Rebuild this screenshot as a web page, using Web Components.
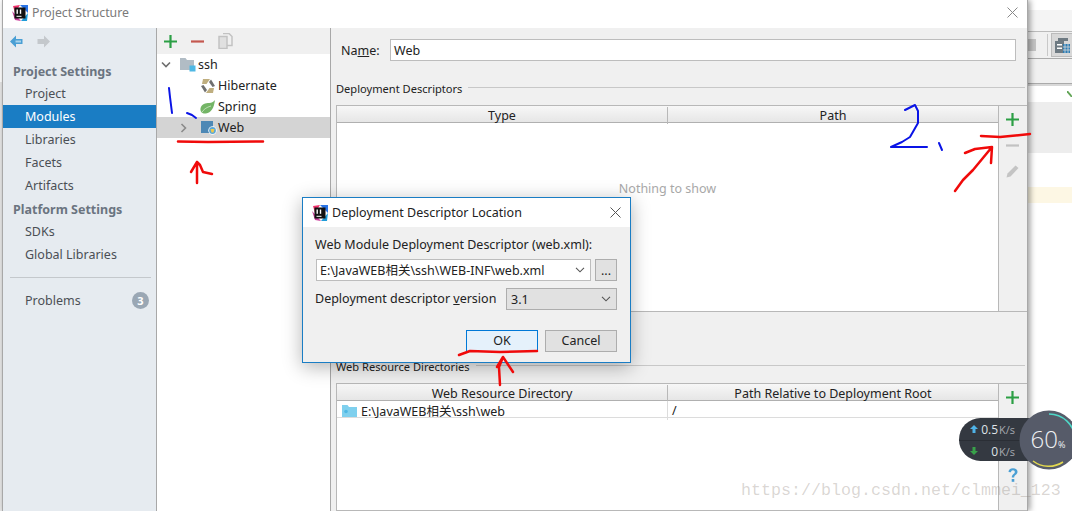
<!DOCTYPE html>
<html>
<head>
<meta charset="utf-8">
<title>Project Structure</title>
<style>
  html, body { margin: 0; padding: 0; background: #fff; }
  body { width: 1072px; height: 511px; overflow: hidden; font: 12.5px "Noto Sans", "Noto Sans CJK SC", sans-serif; color: #222; }
</style>
</head>
<body>
<ps-app></ps-app>
<script>
// Small helper: every element gets an open shadow root from a string
class Base extends HTMLElement {
  constructor() {
    super();
    this.attachShadow({ mode: 'open' });
  }
  connectedCallback() {
    this.shadowRoot.innerHTML = this.render();
  }
}

const icons = {
  back: '<svg width="15" height="15" viewBox="0 0 15 15"><path d="M1 7.500 7 1.500v3.500h6.500v5H7v3.500z" fill="#4a9fd4"/><path d="M6.500 6.500h5.500v2H6.500z" fill="#a9d3ec"/></svg>',
  forward: '<svg width="15" height="15" viewBox="0 0 15 15"><path d="M14 7.500 8 1.500v3.500H1.500v5H8v3.500z" fill="#c4c8cc"/></svg>',
  plus: '<svg width="13" height="13" viewBox="0 0 13 13"><path d="M5.400 0h2.200v5.400H13v2.200H7.600V13H5.400V7.600H0V5.400h5.400z" fill="#2c9f45"/></svg>',
  minus: '<svg width="13" height="13" viewBox="0 0 13 13"><path d="M0 5.400h13v2.200H0z" fill="#c4584f"/></svg>',
  minusOff: '<svg width="13" height="13" viewBox="0 0 13 13"><path d="M0 5.400h13v2.200H0z" fill="#c2c2c2"/></svg>',
  copy: '<svg width="15" height="16" viewBox="0 0 15 16"><path d="M5 .5h6l3 3v9H9" fill="none" stroke="#c2c2c2" stroke-width="1.500"/><path d="M1 3.500h8v12H1z" fill="#e0e0e0" stroke="#c2c2c2" stroke-width="1.500"/></svg>',
  pencil: '<svg width="13" height="13" viewBox="0 0 13 13"><path d="M9.500 0.500 12.500 3 4.500 11.500 0.500 12.500 1.500 8.500z" fill="#c4c4c4"/></svg>',
  help: '<svg width="12" height="16" viewBox="0 0 12 16"><path d="M1.500 5C1.500 2.500 3.300 1.200 6 1.200s4.500 1.400 4.500 3.600c0 3-3.300 3-3.300 5.700H4.800c0-3.400 3-3.500 3-5.500C7.800 4 7.100 3.300 6 3.300S4 4 4 5.300z" fill="#4a9fd4"/><rect x="4.700" y="12" width="2.600" height="2.800" fill="#4a9fd4"/></svg>',
  chevDown: '<svg width="10" height="8" viewBox="0 0 10 8"><path d="M1 1.500 5 5.500 9 1.500" fill="none" stroke="#6e6e6e" stroke-width="1.600"/></svg>',
  chevRight: '<svg width="8" height="10" viewBox="0 0 8 10"><path d="M1.500 1 5.500 5 1.500 9" fill="none" stroke="#8a8a8a" stroke-width="1.600"/></svg>',
  comboArrow: '<svg width="10" height="6" viewBox="0 0 10 6"><path d="M1 .8 5 4.800 9 .8" fill="none" stroke="#555" stroke-width="1.100"/></svg>',
  moduleFolder: '<svg width="16" height="14" viewBox="0 0 16 14"><path d="M0 0h5.500l1.500 2H14v10H0z" fill="#b1bcc5"/><rect x="9.500" y="7.500" width="6" height="6" fill="#4fb8e4"/></svg>',
  hibernate: '<svg width="16" height="16" viewBox="0 0 16 16"><path d="M3 1h7L6.500 6H2z" fill="#bfae7f"/><path d="M13 15H6l3.500-5H14z" fill="#bfae7f"/><path d="M11 1.500 15 8l-2.500 1L9 4z" fill="#6f6f6f"/><path d="M5 14.500 1 8l2.500-1L7 12z" fill="#6f6f6f"/></svg>',
  spring: '<svg width="16" height="14" viewBox="0 0 16 14"><path d="M15 0C14 8 11 13 6 13.500 2.500 14 0 12 .5 8.500 1.200 4 6 3 9 3c3 0 5-1.500 6-3z" fill="#74b566"/><path d="M2 12C5 8 8 7 11 6" stroke="#d6ecd0" stroke-width=".8" fill="none"/></svg>',
  web: '<svg width="16" height="14" viewBox="0 0 16 14"><path d="M0 0h12v12H0z" fill="#4d88b5"/><circle cx="11.500" cy="9.500" r="4.200" fill="#fff"/><circle cx="11.500" cy="9.500" r="3.400" fill="#5aa7d8"/><path d="M9.500 8h4l-1 3.500h-2z" fill="#f0c94a"/></svg>',
  folder: '<svg width="15" height="12" viewBox="0 0 15 12"><path d="M0 0h5.500l1.500 2H15v10H0z" fill="#7fd0ee"/><circle cx="4" cy="6.500" r="1.800" fill="#4fb8e4"/></svg>',
  logo: '<svg width="16" height="16" viewBox="0 0 16 16"><path d="M1 1 8 0 3 8z" fill="#f0316b"/><path d="M8 0h8v8z" fill="#2a74e6"/><path d="M0 6l3 9 6 1z" fill="#c93d9a"/><path d="M9 16h6l1-8z" fill="#1e9bd8"/><rect x="2.500" y="2.500" width="11" height="11" fill="#111"/><rect x="4.500" y="4.500" width="1.400" height="4.300" fill="#fff"/><rect x="7.800" y="4.500" width="1.400" height="4.300" fill="#fff"/><rect x="4.500" y="10.800" width="5" height="1" fill="#fff"/></svg>'
};

class IconGlyph extends Base {
  render() {
    return `<style>:host { display: inline-flex; align-items: center; justify-content: center; flex: none; } svg { display: block; }</style>${icons[this.getAttribute('name')] || ''}`;
  }
}

// Title strip shared by the main window and the dialog
class TitleBar extends Base {
  render() {
    const h = this.getAttribute('height') || 28;
    const lift = this.getAttribute('lift') || 0;
    const close = this.getAttribute('close-color') || '#555';
    const color = this.getAttribute('color') || '#222';
    const size = this.getAttribute('size') || 12.5;
    return `<style>
      :host { display: flex; align-items: center; height: ${h}px; box-sizing: border-box; background: #fff; padding: 0 9px ${lift}px 9px; color: ${color}; font-size: ${size}px; flex: none; }
      span { margin-left: 4px; flex: 1; }
      svg.x { display: block; }
    </style>
    <icon-glyph name="logo"></icon-glyph><span><slot></slot></span>
    <svg class="x" width="11" height="11" viewBox="0 0 11 11"><path d="M.5.500l10 10M10.500.5l-10 10" stroke="${close}" stroke-width="1"/></svg>`;
  }
}

class NavItem extends Base {
  render() {
    const sel = this.hasAttribute('selected');
    return `<style>
      :host { display: flex; align-items: center; height: 23px; padding-left: 22px; color: ${sel ? '#fff' : '#4b4f55'}; background: ${sel ? '#1a7dc4' : 'none'}; }
    </style><slot></slot>`;
  }
}

class NavHead extends Base {
  render() {
    return `<style>
      :host { display: flex; align-items: center; height: 22px; padding-left: 10px; color: #6b7480; font-weight: 700; }
    </style><slot></slot>`;
  }
}

class PsSidebar extends Base {
  render() {
    return `<style>
      :host { display: flex; flex-direction: column; width: 153px; flex: none; background: #e6ebf0; border-right: 1px solid #a8a8a8; }
      .tools { display: flex; height: 26px; padding-left: 6px; gap: 12px; align-items: center; }
      .gap1 { height: 6px; }
      .gap2 { height: 1px; }
      hr { border: 0; height: 1px; background: #c4c8cc; margin: 11px 5px 11px 7px; }
      .problems { display: flex; align-items: center; justify-content: space-between; padding-right: 7px; }
      .badge { width: 17px; height: 17px; border-radius: 50%; background: #9aa7b4; color: #fff; font-size: 11px; font-weight: 700; display: flex; align-items: center; justify-content: center; }
    </style>
    <div class="tools"><icon-glyph name="back"></icon-glyph><icon-glyph name="forward"></icon-glyph></div>
    <div class="gap1"></div>
    <nav-head>Project Settings</nav-head>
    <nav-item>Project</nav-item>
    <nav-item selected>Modules</nav-item>
    <nav-item>Libraries</nav-item>
    <nav-item>Facets</nav-item>
    <nav-item>Artifacts</nav-item>
    <div class="gap2"></div>
    <nav-head>Platform Settings</nav-head>
    <nav-item>SDKs</nav-item>
    <nav-item>Global Libraries</nav-item>
    <hr>
    <nav-item class="problems">Problems<span class="badge">3</span></nav-item>`;
  }
}

class TreeRow extends Base {
  render() {
    const sel = this.hasAttribute('selected');
    const chev = this.getAttribute('chevron');
    const pad = this.getAttribute('pad') || 4;
    const gap = this.getAttribute('gap') || 9;
    const tgap = this.getAttribute('text-gap') || 2;
    return `<style>
      :host { display: flex; align-items: center; height: 21px; padding-left: ${pad}px; background: ${sel ? '#d4d4d4' : 'none'}; color: #222; }
      .c { width: 10px; margin-right: ${gap}px; display: flex; justify-content: center; }
      .t { margin-left: ${tgap}px; }
    </style>
    ${chev ? `<span class="c"><icon-glyph name="${chev}"></icon-glyph></span>` : ''}
    <icon-glyph name="${this.getAttribute('icon')}"></icon-glyph><span class="t"><slot></slot></span>`;
  }
}

class TreePanel extends Base {
  render() {
    return `<style>
      :host { display: flex; flex-direction: column; width: 173px; flex: none; background: #fff; border-right: 1px solid #a8a8a8; }
      .tools { height: 26px; background: #f0f0f0; display: flex; align-items: center; padding-left: 7px; gap: 14px; flex: none; }
    </style>
    <div class="tools"><icon-glyph name="plus"></icon-glyph><icon-glyph name="minus"></icon-glyph><icon-glyph name="copy"></icon-glyph></div>
    <div class="rows">
      <tree-row chevron="chevDown" icon="moduleFolder">ssh</tree-row>
      <tree-row pad="43" icon="hibernate">Hibernate</tree-row>
      <tree-row pad="43" icon="spring">Spring</tree-row>
      <tree-row selected pad="22" gap="12" text-gap="1" chevron="chevRight" icon="web">Web</tree-row>
    </div>`;
  }
}

class GroupTitle extends Base {
  render() {
    return `<style>
      :host { display: flex; align-items: center; height: 16px; box-sizing: border-box; padding-bottom: 2px; font-size: 11.1px; color: #222; gap: 6px; }
      i { flex: 1; height: 1px; background: #c8c8c8; position: relative; top: -1px; margin-right: 2px; }
    </style><slot></slot><i></i>`;
  }
}

class DataTable extends Base {
  render() {
    return `<style>
      :host { display: flex; flex-direction: column; flex: 1; min-width: 0; background: #fff; border: 1px solid #b8b8b8; border-right: 0; box-sizing: border-box; }
      .head { display: grid; grid-template-columns: 330px 1fr; height: 16px; flex: none; background: linear-gradient(#f7f7f7, #e6e6e6); border-bottom: 1px solid #b0b0b0; }
      .head span { display: flex; align-items: center; justify-content: center; font-size: 12.5px; color: #222; }
      .head span + span { border-left: 1px solid #b8b8b8; margin: 1px 0; }
      .body { flex: 1; display: flex; flex-direction: column; }
    </style>
    <div class="head"><span>${this.getAttribute('col-a')}</span><span>${this.getAttribute('col-b')}</span></div>
    <div class="body"><slot></slot></div>`;
  }
}

class SideTools extends Base {
  render() {
    return `<style>
      :host { display: flex; flex-direction: column; align-items: center; width: 29px; flex: none; border: 1px solid #b8b8b8; border-right: 0; box-sizing: border-box; padding: 7px 1px 0 0; gap: 13px; }
    </style><slot></slot>`;
  }
}

class FormPane extends Base {
  render() {
    return `<style>
      :host { display: flex; flex-direction: column; flex: 1; min-width: 0; background: #f0f0f0; padding-left: 5px; box-sizing: border-box; }
      .name { display: flex; align-items: center; height: 22px; margin-top: 11px; flex: none; }
      .name label { width: 54px; padding-left: 5px; box-sizing: border-box; }
      .name u { text-decoration: underline; }
      .name div { width: 626px; height: 22px; box-sizing: border-box; border: 1px solid #bdbdbd; background: #fff; padding-left: 3px; display: flex; align-items: center; }
      group-title.a { margin-top: 20px; }
      .sec { display: flex; flex: none; }
      .sec.a { height: 207px; margin-top: 8px; }
      .sec.b { flex: 1; margin-top: 8px; }
      group-title.b { margin-top: 47px; }
      .empty { height: 130px; flex: none; display: flex; align-items: center; justify-content: center; color: #a8a8a8; }
      .row { display: grid; grid-template-columns: 330px 1fr; height: 16px; border-bottom: 1px solid #dcdcdc; font-size: 12.5px; }
      .row > span { display: flex; align-items: center; gap: 4px; padding-left: 5px; }
      .row > span + span { border-left: 1px solid #dcdcdc; padding-left: 4px; }
    </style>
    <div class="name"><label>Na<u>m</u>e:</label><div>Web</div></div>
    <group-title class="a">Deployment Descriptors</group-title>
    <div class="sec a">
      <data-table col-a="Type" col-b="Path"><div class="empty">Nothing to show</div></data-table>
      <side-tools><icon-glyph name="plus"></icon-glyph><icon-glyph name="minusOff"></icon-glyph><icon-glyph name="pencil"></icon-glyph></side-tools>
    </div>
    <group-title class="b">Web Resource Directories</group-title>
    <div class="sec b">
      <data-table col-a="Web Resource Directory" col-b="Path Relative to Deployment Root">
        <div class="row"><span><icon-glyph name="folder"></icon-glyph>E:\\JavaWEB相关\\ssh\\web</span><span>/</span></div>
      </data-table>
      <side-tools>
        <icon-glyph name="plus"></icon-glyph>
        <icon-glyph name="help" style="margin-top:50px"></icon-glyph>
      </side-tools>
    </div>`;
  }
}

class PsWindow extends Base {
  render() {
    return `<style>
      :host { display: flex; flex-direction: column; width: 1026px; height: 511px; flex: none; background: #fff; box-shadow: 2px 0 6px rgba(0,0,0,.4); border-left: 1px solid #a8a8a8; border-right: 1px solid #a8a8a8; box-sizing: border-box; position: relative; }
      .body { display: flex; flex: 1; min-height: 0; }
    </style>
    <title-bar height="28" lift="3" size="12.3" close-color="#888" color="#7a7a7a">Project Structure</title-bar>
    <div class="body"><ps-sidebar></ps-sidebar><tree-panel></tree-panel><form-pane></form-pane></div>`;
  }
}

// What shows of the IDE behind the window
class IdeBackdrop extends Base {
  render() {
    const side = this.getAttribute('side');
    if (side === 'left') {
      return `<style>:host { display: block; width: 2px; flex: none; background: linear-gradient(#fff 82px, #e8e8e8 82px); }</style>`;
    }
    return `<style>
      :host { display: flex; flex-direction: column; flex: 1; min-width: 0; background: #fff; }
      .a { height: 10px; }
      .b { height: 21px; background: #f4f4f4; border-bottom: 1px solid #bbb; }
      .tools { height: 26px; background: #f0f0f0; display: flex; align-items: center; border-bottom: 1px solid #aaa; }
      .tools i { display: block; width: 8px; height: 12px; background: #c4c4c4; }
      .tools b { display: block; width: 1px; height: 22px; background: #c8c8c8; margin-left: 11px; }
      .tools span { display: flex; align-items: center; justify-content: center; width: 21px; height: 24px; margin-left: 3px; background: #d8d8d8; border: 1px solid #bbb; border-right: 0; box-sizing: border-box; }
      .tools svg { display: block; }
      .g { height: 24px; background: #f0f0f0; border-bottom: 1px solid #aaa; }
      .c { height: 18px; border-top: 2px solid #d8d8d8; display: flex; justify-content: flex-end; align-items: flex-start; padding-top: 5px; box-sizing: border-box; }
      .d { height: 51px; background: #ededed; }
      .e { height: 34px; }
      .f { height: 16px; background: #fdf7e4; }
    </style>
    <div class="a"></div><div class="b"></div>
    <div class="tools"><i></i><b></b><span><svg width="15" height="15" viewBox="0 0 15 15"><path d="M3 0h10v3H3zM0 3h9v12H0z" fill="#6e7a82"/><path d="M2 6h5v1.500H2zM2 9.500h5V11H2z" fill="#fff"/><path d="M8 6h7v9H8z" fill="#2d7db5"/><path d="M10 6v9M13 6v9M8 9h7M8 12h7" stroke="#d8d8d8" stroke-width=".8"/></svg></span></div>
    <div class="g"></div>
    <div class="c"><svg width="5" height="6" viewBox="0 0 5 6"><path d="M0 0l5 6" stroke="#62a557" stroke-width="1.800"/></svg></div>
    <div class="d"></div><div class="e"></div><div class="f"></div>`;
  }
}

class DdDialog extends Base {
  render() {
    return `<style>
      :host { position: absolute; left: 302px; top: 197px; width: 329px; height: 166px; box-sizing: border-box; background: #f0f0f0; border: 1px solid #1a7dc4; box-shadow: 0 4px 18px rgba(0,0,0,.3); display: flex; flex-direction: column; color: #222; font-size: 12.5px; }
      .content { display: flex; flex-direction: column; padding: 0 13px 0 12px; flex: 1; }
      .lbl { height: 15px; line-height: 15px; margin-top: 10px; }
      .combo { display: flex; gap: 4px; margin-top: 7px; margin-left: 1px; height: 22px; }
      .field { width: 275px; box-sizing: border-box; border: 1px solid #bdbdbd; background: #fff; display: flex; align-items: center; justify-content: space-between; padding: 0 5px 1px 3px; }
      .dots { width: 22px; border: 1px solid #adadad; background: #e1e1e1; box-sizing: border-box; display: flex; justify-content: center; align-items: center; }
      .ver { display: flex; justify-content: space-between; align-items: center; height: 22px; margin-top: 7px; }
      .ver > span { padding-bottom: 2px; }
      .sel { width: 111px; height: 22px; box-sizing: border-box; border: 1px solid #adadad; background: #e1e1e1; display: flex; align-items: center; justify-content: space-between; padding: 0 5px 0 4px; }
      .btns { display: flex; justify-content: flex-end; gap: 7px; margin-top: 20px; }
      .btn { width: 72px; height: 22px; box-sizing: border-box; border: 1px solid #adadad; background: #e1e1e1; display: flex; align-items: center; justify-content: center; padding-bottom: 1px; }
      .btn.ok { background: #e5f1fb; border-color: #0078d7; }
      u { text-decoration: underline; }
    </style>
    <title-bar height="29">Deployment Descriptor Location</title-bar>
    <div class="content">
      <div class="lbl">Web Module Deployment Descriptor (web.xml):</div>
      <div class="combo"><div class="field"><span>E:\\JavaWEB相关\\ssh\\WEB-INF\\web.xml</span><icon-glyph name="comboArrow"></icon-glyph></div><div class="dots">...</div></div>
      <div class="ver"><span>Deployment descriptor <u>v</u>ersion</span><div class="sel"><span>3.1</span><icon-glyph name="comboArrow"></icon-glyph></div></div>
      <div class="btns"><div class="btn ok">OK</div><div class="btn">Cancel</div></div>
    </div>`;
  }
}

class NetWidget extends Base {
  render() {
    return `<style>
      :host { position: absolute; left: 959px; top: 410px; width: 113px; height: 60px; color: #dfe3e8; font-family: "Open Sans", "Noto Sans", sans-serif; }
      .pill { position: absolute; left: 0; top: 8px; width: 90px; height: 43px; border-radius: 21.500px; background: #343941; display: grid; grid-template-rows: 1fr 1fr; }
      .pill div { display: flex; align-items: center; padding: 1px 0 0 11px; font-size: 12px; }
      .pill div + div { border-top: 1px solid #2a2e35; }
      .pill .v { width: 20px; text-align: right; }
      .pill .u { font-size: 11px; color: #a5a9b0; margin-left: 1px; }
      .ring { position: absolute; left: 60px; top: 0; }
      .pct { position: absolute; left: 59px; top: 12px; width: 60px; text-align: center; font-size: 24px; line-height: 33px; font-weight: 300; color: #eef0f3; }
      .pct small { font-size: 9px; font-weight: 400; }
    </style>
    <div class="pill">
      <div><svg width="8" height="8" viewBox="0 0 8 8"><path d="M4 0 8 4H5.500v4h-3V4H0z" fill="#4fb3e8"/></svg><span class="v">0.5</span><span class="u">K/s</span></div>
      <div><svg width="8" height="8" viewBox="0 0 8 8"><path d="M4 8 8 4H5.500V0h-3v4H0z" fill="#38a14a"/></svg><span class="v">0</span><span class="u">K/s</span></div>
    </div>
    <svg class="ring" width="60" height="60" viewBox="0 0 60 60"><circle cx="30" cy="30" r="29.500" fill="#565b69"/><path d="M30 4A26 26 0 0 1 56 28" fill="none" stroke="#4ed8c8" stroke-width="1.500"/><path d="M44 52A26 26 0 0 1 14 51" fill="none" stroke="#e3d94f" stroke-width="1.500"/></svg>
    <div class="pct">60<small>%</small></div>`;
  }
}

// Hand drawn marks on top of the screenshot
class InkNotes extends Base {
  render() {
    return `<style>
      :host { position: absolute; left: 0; top: 0; width: 1072px; height: 511px; pointer-events: none; }
      svg { display: block; }
      path { fill: none; stroke-linecap: round; stroke-linejoin: round; }
      .r { stroke: #f00a0a; stroke-width: 2.500; }
      .b { stroke: #0a14e6; stroke-width: 2; }
    </style>
    <svg width="1072" height="511" viewBox="0 0 1072 511">
      <path class="b" d="M169 88l1 9 1 8 1 8"/>
      <path class="b" d="M187 113l5 2 4 3"/>
      <path class="r" d="M178 141.500l30 .5 55-.5"/>
      <path class="r" d="M197 183l0-21M191 172l6-10 3 3 3 7 9 2"/>
      <path class="b" d="M905 110l10-5 3 6 0 12-8 14-8 5-11 5 36 0"/>
      <path class="b" d="M939 143l3 7"/>
      <path class="r" d="M981 136l19 1 30-3"/>
      <path class="r" d="M955 191l8-11 10-10 19-23-1 16M965 153l10-4 17-2"/>
      <path class="r" d="M459 355l11-4 30 1 37-1"/>
      <path class="r" d="M500 385l-1-18 4-10M497 367l6-10 10 15"/>
    </svg>`;
  }
}

class WaterMark extends Base {
  render() {
    return `<style>
      :host { position: absolute; left: 741px; top: 481px; font: 16.67px/20px "Liberation Mono", monospace; color: rgba(140,130,120,.32); white-space: nowrap; }
    </style>https://blog.csdn.net/clmmei_123`;
  }
}

class PsApp extends Base {
  render() {
    return `<style>
      :host { display: flex; position: relative; width: 1072px; height: 511px; overflow: hidden; }
    </style>
    <ide-backdrop side="left"></ide-backdrop>
    <ps-window></ps-window>
    <ide-backdrop side="right"></ide-backdrop>
    <dd-dialog></dd-dialog>
    <net-widget></net-widget>
    <ink-notes></ink-notes>
    <water-mark></water-mark>`;
  }
}

customElements.define('icon-glyph', IconGlyph);
customElements.define('title-bar', TitleBar);
customElements.define('nav-item', NavItem);
customElements.define('nav-head', NavHead);
customElements.define('ps-sidebar', PsSidebar);
customElements.define('tree-row', TreeRow);
customElements.define('tree-panel', TreePanel);
customElements.define('group-title', GroupTitle);
customElements.define('data-table', DataTable);
customElements.define('side-tools', SideTools);
customElements.define('form-pane', FormPane);
customElements.define('ps-window', PsWindow);
customElements.define('ide-backdrop', IdeBackdrop);
customElements.define('dd-dialog', DdDialog);
customElements.define('net-widget', NetWidget);
customElements.define('ink-notes', InkNotes);
customElements.define('water-mark', WaterMark);
customElements.define('ps-app', PsApp);
</script>
</body>
</html>
